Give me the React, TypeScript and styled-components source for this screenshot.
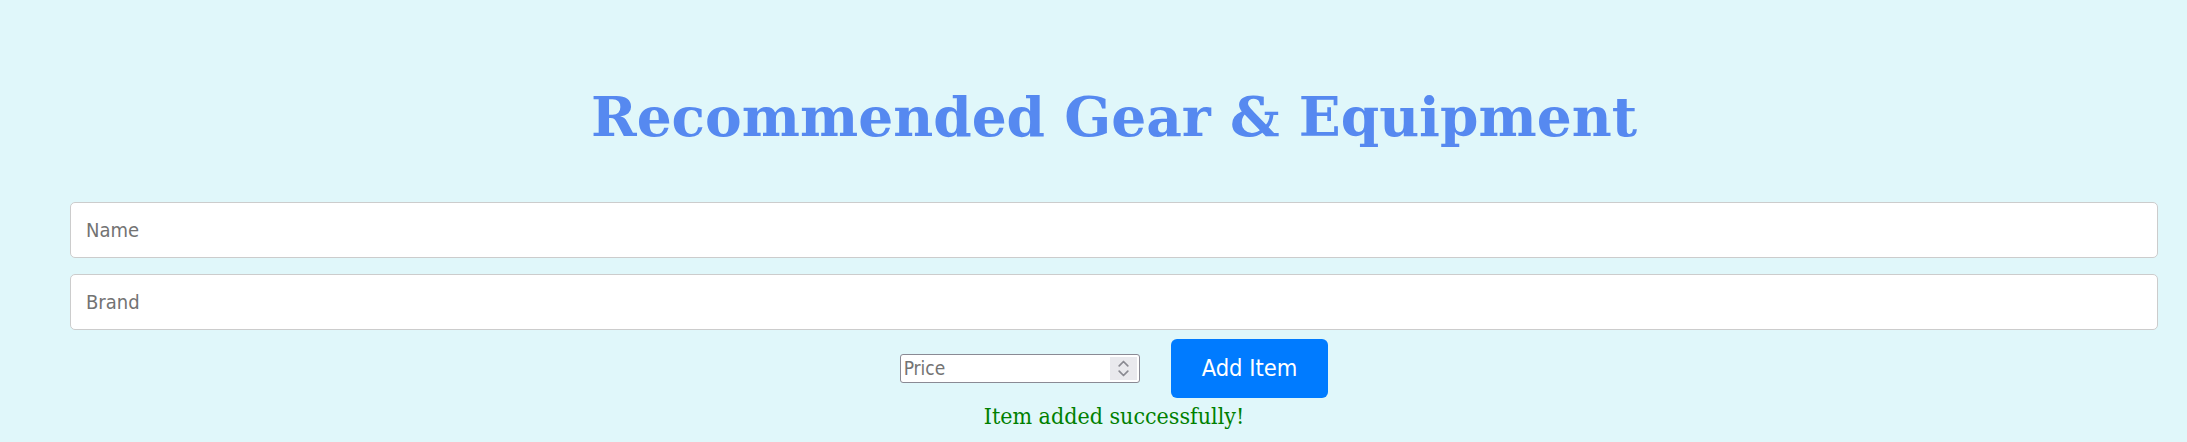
import React from "react";
import styled, { createGlobalStyle } from "styled-components";

const GlobalStyle = createGlobalStyle`
  html, body {
    margin: 0;
    padding: 0;
    background: #e0f7fa;
  }
  body {
    font-family: "DejaVu Serif", Georgia, serif;
  }
  * { box-sizing: border-box; }
`;

const Page = styled.main`
  display: flex;
  flex-direction: column;
  padding: 85px 29px 0 70px;
  min-height: 442px;
  background: #e0f7fa;
`;

const Title = styled.h1`
  margin: 0 0 53px;
  font-family: "DejaVu Serif", Georgia, serif;
  font-weight: bold;
  font-size: 55px;
  line-height: 64px;
  color: #5689f0;
  text-align: center;
  white-space: nowrap;
`;

const Form = styled.form`
  display: flex;
  flex-direction: column;
  gap: 16px;
`;

const TextField = styled.input`
  display: block;
  width: 100%;
  height: 56px;
  padding: 0 15px;
  border: 1px solid #cccccc;
  border-radius: 5px;
  background: #ffffff;
  font-family: "DejaVu Sans", Tahoma, sans-serif;
  font-stretch: condensed;
  font-size: 20px;
  color: #333;
  outline: none;
  &::placeholder {
    color: #737373;
    opacity: 1;
  }
`;

const ActionRow = styled.div`
  display: flex;
  justify-content: center;
  align-items: center;
  gap: 31px;
  margin-top: -7px;
`;

const PriceField = styled.label`
  display: flex;
  align-items: stretch;
  width: 240px;
  height: 29px;
  padding: 2px 2px 2px 2px;
  border: 1px solid #8a8a94;
  border-radius: 3px;
  background: #ffffff;
`;

const PriceInput = styled.input`
  flex: 1;
  min-width: 0;
  border: none;
  outline: none;
  padding: 0 0 0 1px;
  margin: 0;
  background: transparent;
  font-family: "DejaVu Sans", Tahoma, sans-serif;
  font-stretch: condensed;
  font-size: 19px;
  line-height: 23px;
  color: #333;
  -moz-appearance: textfield;
  &::-webkit-outer-spin-button,
  &::-webkit-inner-spin-button {
    -webkit-appearance: none;
    margin: 0;
  }
  &::placeholder {
    color: #737373;
    opacity: 1;
  }
`;

const Spinner = styled.span`
  display: flex;
  flex-direction: column;
  align-items: center;
  justify-content: center;
  gap: 3px;
  width: 27px;
  background: #e9e9ed;
  color: #8a8a92;
`;

const AddButton = styled.button`
  padding: 15px 31px;
  border: none;
  border-radius: 6px;
  background: #007bff;
  color: #ffffff;
  font-family: "DejaVu Sans", Tahoma, sans-serif;
  font-stretch: condensed;
  font-size: 23.5px;
  line-height: 29px;
  cursor: pointer;
`;

const Message = styled.p`
  margin: 5px 0 0;
  font-family: "DejaVu Serif", Georgia, serif;
  font-stretch: condensed;
  font-size: 23px;
  line-height: 27px;
  color: #008000;
  text-align: center;
`;

function Chevron({ up }: { up?: boolean }) {
  return (
    <svg width="11" height="7" viewBox="0 0 11 7" aria-hidden="true">
      <path
        d={up ? "M1.2 5.8 L5.5 1.5 L9.8 5.8" : "M1.2 1.2 L5.5 5.5 L9.8 1.2"}
        fill="none"
        stroke="currentColor"
        strokeWidth="1.7"
        strokeLinecap="round"
        strokeLinejoin="round"
      />
    </svg>
  );
}

export default function App() {
  return (
    <>
      <GlobalStyle />
      <Page>
        <Title>Recommended Gear &amp; Equipment</Title>
        <Form onSubmit={(e) => e.preventDefault()}>
          <TextField type="text" placeholder="Name" />
          <TextField type="text" placeholder="Brand" />
          <ActionRow>
            <PriceField>
              <PriceInput type="number" placeholder="Price" />
              <Spinner>
                <Chevron up />
                <Chevron />
              </Spinner>
            </PriceField>
            <AddButton type="submit">Add Item</AddButton>
          </ActionRow>
        </Form>
        <Message>Item added successfully!</Message>
      </Page>
    </>
  );
}
